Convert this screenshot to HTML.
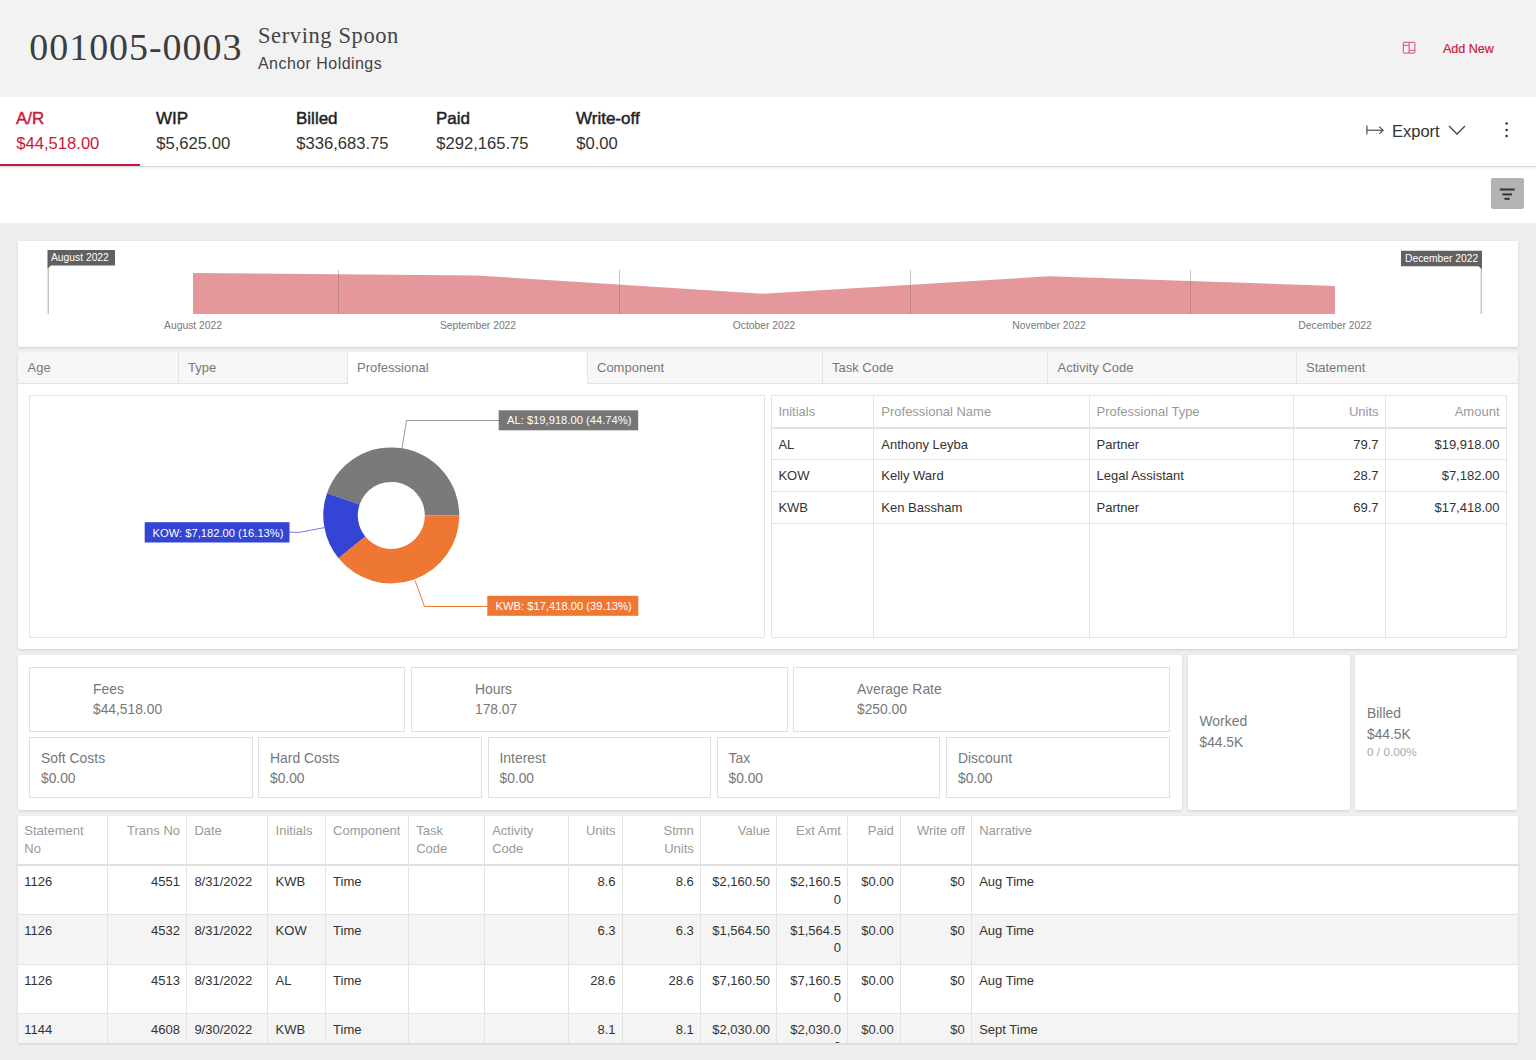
<!DOCTYPE html>
<html><head><meta charset="utf-8">
<style>
*{box-sizing:border-box;margin:0;padding:0}
html,body{width:1536px;height:1060px;overflow:hidden;background:#efefef;font-family:"Liberation Sans",sans-serif;color:#333}
.abs{position:absolute}
#hdr{position:absolute;left:0;top:0;width:1536px;height:97px;background:#f2f2f2}
#title{position:absolute;left:29.3px;top:24.8px;font-family:"Liberation Serif",serif;font-size:38px;letter-spacing:0.95px;color:#3d3d3d;line-height:44px;white-space:nowrap}
#sub1{position:absolute;left:258px;top:22.3px;font-family:"Liberation Serif",serif;font-size:22.5px;letter-spacing:0.6px;color:#444;line-height:28px;white-space:nowrap}
#sub2{position:absolute;left:258px;top:54px;font-size:16px;letter-spacing:0.45px;color:#444;line-height:20px;white-space:nowrap}
#addnew{position:absolute;left:1443px;top:42px;font-size:12.5px;color:#c8193c;line-height:15px;-webkit-text-stroke:0.2px #c8193c}
#tabbar{position:absolute;left:0;top:97px;width:1536px;height:70px;background:#fff;border-bottom:1px solid #d6d6d6;box-shadow:0 1px 2px rgba(0,0,0,0.08);z-index:2}
.stab{position:absolute;top:0;width:140px;height:69px}
.stab .l{position:absolute;left:16px;top:12px;font-size:17px;-webkit-text-stroke:0.45px currentColor;line-height:20px;color:#222;white-space:nowrap}
.stab .v{position:absolute;left:16.3px;top:37.3px;font-size:16.6px;line-height:20px;color:#333;white-space:nowrap}
.stab.act .l,.stab.act .v{color:#c8193c}
.stab.act{border-bottom:2px solid #c8193c;height:69px}
#white2{position:absolute;left:0;top:167px;width:1536px;height:56px;background:#fff}
.card{position:absolute;background:#fff;box-shadow:0 1px 3px rgba(0,0,0,0.14);border-radius:2px}

.ptab{position:absolute;top:-1px;height:32px;background:#f7f7f7;border:1px solid #e3e3e3;border-top:none;border-left:none;font-size:13px;color:#777;line-height:15px;padding:8px 0 0 9.5px;white-space:nowrap}
.ptab.act{background:#fff;border-bottom-color:#fff}
.pc{font-size:13px;line-height:15px;white-space:nowrap}
.pt td,.pt th{border:1px solid #e0e0e0;height:32px;padding:0 7px;font-weight:normal;text-align:left;white-space:nowrap}
.pt th{color:#999;border-bottom:2px solid #e0e0e0}
.pt .r{text-align:right}

.sb{position:absolute;border:1px solid #e0e0e0;background:#fff}
.st{position:absolute;font-size:13.9px;line-height:20px;color:#777;white-space:nowrap}
.sv{font-size:13.8px}
.dt{position:absolute;font-size:13px;line-height:17.5px;white-space:nowrap}
</style></head><body>
<div id="hdr">
  <div id="title">001005-0003</div>
  <div id="sub1">Serving Spoon</div>
  <div id="sub2">Anchor Holdings</div>
  <svg class="abs" style="left:1402px;top:41px" width="14" height="13" viewBox="0 0 14 13">
    <rect x="1.3" y="1.3" width="11.6" height="10.8" rx="0.8" fill="none" stroke="#d23b55" stroke-width="0.9"/>
    <line x1="7.1" y1="1.3" x2="7.1" y2="12.1" stroke="#d23b55" stroke-width="0.9"/>
    <line x1="1.3" y1="4.4" x2="7.1" y2="4.4" stroke="#d23b55" stroke-width="0.8"/>
    <line x1="7.1" y1="9.4" x2="12.9" y2="9.4" stroke="#d23b55" stroke-width="0.8"/>
  </svg>
  <div id="addnew">Add New</div>
</div>
<div id="tabbar">
  <div class="stab act" style="left:0"><div class="l">A/R</div><div class="v">$44,518.00</div></div>
  <div class="stab" style="left:140px"><div class="l">WIP</div><div class="v">$5,625.00</div></div>
  <div class="stab" style="left:280px"><div class="l">Billed</div><div class="v">$336,683.75</div></div>
  <div class="stab" style="left:420px"><div class="l">Paid</div><div class="v">$292,165.75</div></div>
  <div class="stab" style="left:560px"><div class="l">Write-off</div><div class="v">$0.00</div></div>
  <svg class="abs" style="left:1364px;top:27px" width="22" height="12" viewBox="0 0 22 12">
    <line x1="2.9" y1="1.6" x2="2.9" y2="10.2" stroke="#444" stroke-width="1.15"/>
    <line x1="3" y1="6.2" x2="19" y2="6.2" stroke="#444" stroke-width="1.15"/>
    <polyline points="15.3,2.6 19.1,6.2 15.3,9.8" fill="none" stroke="#444" stroke-width="1.15"/>
  </svg>
  <div class="abs" style="left:1392px;top:24px;font-size:16.5px;line-height:20px;color:#333">Export</div>
  <svg class="abs" style="left:1448px;top:28px" width="18" height="10" viewBox="0 0 18 10">
    <polyline points="1,1 9,9 17,1" fill="none" stroke="#444" stroke-width="1.3"/>
  </svg>
  <svg class="abs" style="left:1504px;top:24px" width="5" height="17" viewBox="0 0 5 17">
    <circle cx="2.6" cy="2.4" r="1.25" fill="#333"/><circle cx="2.6" cy="8.9" r="1.25" fill="#333"/><circle cx="2.6" cy="14.9" r="1.25" fill="#333"/>
  </svg>
</div>
<div id="white2">
  <div class="abs" style="left:1491px;top:11px;width:33px;height:31px;background:#b3b3b3;border-radius:2px">
    <svg class="abs" style="left:0;top:0" width="33" height="31" viewBox="0 0 33 31">
      <line x1="8.8" y1="11.5" x2="23.7" y2="11.5" stroke="#333" stroke-width="2"/>
      <line x1="11.3" y1="16.4" x2="21" y2="16.4" stroke="#333" stroke-width="2"/>
      <line x1="13.4" y1="20.8" x2="18.8" y2="20.8" stroke="#333" stroke-width="2"/>
    </svg>
  </div>
</div>

<div class="card" style="left:18px;top:241px;width:1500px;height:106px">
<svg class="abs" style="left:0;top:0" width="1500" height="106" viewBox="18 241 1500 106">
  <polygon points="193,273 477,275.5 763,293.8 1049,276.3 1335,286 1335,314 193,314" fill="#e5989b"/>
  <g stroke="#8a6a6a" stroke-width="1" opacity="0.42">
    <line x1="338.5" y1="270" x2="338.5" y2="314"/>
    <line x1="619.5" y1="270" x2="619.5" y2="314"/>
    <line x1="910.5" y1="270" x2="910.5" y2="314"/>
    <line x1="1190.5" y1="270" x2="1190.5" y2="314"/>
  </g>
  <line x1="48.2" y1="262" x2="48.2" y2="314" stroke="#adadad" stroke-width="1"/>
  <line x1="1481.2" y1="262" x2="1481.2" y2="314" stroke="#adadad" stroke-width="1"/>
  <path d="M47.5,250 H115 V265.6 H51 L47.5,268.8 Z" fill="#616161"/>
  <path d="M1401,250.8 H1482 V269.3 L1478.5,266.2 H1401 Z" fill="#616161"/>
  <g font-family="Liberation Sans" font-size="10.3" fill="#fff">
    <text x="51" y="261.2">August 2022</text>
    <text x="1405" y="262">December 2022</text>
  </g>
  <g font-family="Liberation Sans" font-size="10.3" fill="#777" text-anchor="middle">
    <text x="193" y="329">August 2022</text>
    <text x="478" y="329">September 2022</text>
    <text x="764" y="329">October 2022</text>
    <text x="1049" y="329">November 2022</text>
    <text x="1335" y="329">December 2022</text>
  </g>
</svg>
</div>

<div class="card" style="left:18px;top:353px;width:1500px;height:296px">
  <div class="ptab" style="left:0;width:160.5px;border-left:none">Age</div>
  <div class="ptab" style="left:160.5px;width:169px">Type</div>
  <div class="ptab act" style="left:329.5px;width:240px">Professional</div>
  <div class="ptab" style="left:569.5px;width:235px">Component</div>
  <div class="ptab" style="left:804.5px;width:225.5px">Task Code</div>
  <div class="ptab" style="left:1030px;width:248.5px">Activity Code</div>
  <div class="ptab" style="left:1278.5px;width:221.5px;border-right:none">Statement</div>
  <div class="abs" style="left:11px;top:42px;width:736px;height:243px;border:1px solid #e3e3e3"></div>
  <svg class="abs" style="left:0;top:0" width="760" height="295" viewBox="18 353 760 295">
    <g id="donut"><path d="M459.30,515.40 A68,68 0 0 0 326.98,493.33 L359.61,504.53 A33.5,33.5 0 0 1 424.80,515.40 Z" fill="#7a7a7a"/>
<path d="M326.98,493.33 A68,68 0 0 0 338.55,558.32 L365.31,536.54 A33.5,33.5 0 0 1 359.61,504.53 Z" fill="#3444d4"/>
<path d="M338.55,558.32 A68,68 0 0 0 459.30,515.40 L424.80,515.40 A33.5,33.5 0 0 1 365.31,536.54 Z" fill="#ee7733"/>
<polyline points="402,448 406.5,420.5 499,420.5" fill="none" stroke="#999" stroke-width="1"/>
<polyline points="415,580.5 424.5,606.5 488,606.5" fill="none" stroke="#ee7733" stroke-width="1"/>
<polyline points="289,532 298.5,532.5 325,527.5" fill="none" stroke="#6f7ae6" stroke-width="1"/>
<rect x="498.7" y="410.3" width="139.5" height="20" fill="#767676"/>
<rect x="487.3" y="595.8" width="151" height="20" fill="#ee7733"/>
<rect x="144.7" y="522.2" width="144.8" height="20.3" fill="#3444d4"/>
<g font-family="Liberation Sans" font-size="11.2" fill="#fff"><text x="507" y="424.3">AL: $19,918.00 (44.74%)</text><text x="495.5" y="610">KWB: $17,418.00 (39.13%)</text><text x="152.5" y="536.5">KOW: $7,182.00 (16.13%)</text></g></g>
  </svg>
<div class="abs" style="left:753px;top:42px;width:1px;height:243px;background:#e3e3e3"></div>
<div class="abs" style="left:855px;top:42px;width:1px;height:243px;background:#e3e3e3"></div>
<div class="abs" style="left:1071px;top:42px;width:1px;height:243px;background:#e3e3e3"></div>
<div class="abs" style="left:1275px;top:42px;width:1px;height:243px;background:#e3e3e3"></div>
<div class="abs" style="left:1367px;top:42px;width:1px;height:243px;background:#e3e3e3"></div>
<div class="abs" style="left:1488px;top:42px;width:1px;height:243px;background:#e3e3e3"></div>
<div class="abs" style="left:753px;top:42px;width:736px;height:1px;background:#e3e3e3"></div>
<div class="abs" style="left:753px;top:74px;width:736px;height:2px;background:#e3e3e3"></div>
<div class="abs" style="left:753px;top:106px;width:736px;height:1px;background:#e3e3e3"></div>
<div class="abs" style="left:753px;top:138px;width:736px;height:1px;background:#e3e3e3"></div>
<div class="abs" style="left:753px;top:170px;width:736px;height:1px;background:#e3e3e3"></div>
<div class="abs" style="left:753px;top:284px;width:736px;height:1px;background:#e3e3e3"></div>
<div class="abs pc" style="left:760.4px;top:51px;color:#999">Initials</div>
<div class="abs pc" style="left:863.3px;top:51px;color:#999">Professional Name</div>
<div class="abs pc" style="left:1078.5px;top:51px;color:#999">Professional Type</div>
<div class="abs pc" style="right:139.5px;top:51px;color:#999;text-align:right">Units</div>
<div class="abs pc" style="right:18.5px;top:51px;color:#999;text-align:right">Amount</div>
<div class="abs pc" style="left:760.4px;top:83.5px;color:#333">AL</div>
<div class="abs pc" style="left:863.3px;top:83.5px;color:#333">Anthony Leyba</div>
<div class="abs pc" style="left:1078.5px;top:83.5px;color:#333">Partner</div>
<div class="abs pc" style="right:139.5px;top:83.5px;color:#333;text-align:right">79.7</div>
<div class="abs pc" style="right:18.5px;top:83.5px;color:#333;text-align:right">$19,918.00</div>
<div class="abs pc" style="left:760.4px;top:115.1px;color:#333">KOW</div>
<div class="abs pc" style="left:863.3px;top:115.1px;color:#333">Kelly Ward</div>
<div class="abs pc" style="left:1078.5px;top:115.1px;color:#333">Legal Assistant</div>
<div class="abs pc" style="right:139.5px;top:115.1px;color:#333;text-align:right">28.7</div>
<div class="abs pc" style="right:18.5px;top:115.1px;color:#333;text-align:right">$7,182.00</div>
<div class="abs pc" style="left:760.4px;top:146.7px;color:#333">KWB</div>
<div class="abs pc" style="left:863.3px;top:146.7px;color:#333">Ken Bassham</div>
<div class="abs pc" style="left:1078.5px;top:146.7px;color:#333">Partner</div>
<div class="abs pc" style="right:139.5px;top:146.7px;color:#333;text-align:right">69.7</div>
<div class="abs pc" style="right:18.5px;top:146.7px;color:#333;text-align:right">$17,418.00</div>
</div>
<div class="card" style="left:18px;top:654.5px;width:1164px;height:155.5px"></div>
<div class="card" style="left:1187.5px;top:655px;width:162px;height:155px;border-radius:2px"></div>
<div class="card" style="left:1355px;top:655px;width:162px;height:155px;border-radius:2px"></div>
<div class="sb" style="left:29px;top:667px;width:376px;height:64.5px"></div>
<div class="st" style="left:93px;top:678.5px">Fees</div><div class="st sv" style="left:93px;top:700.0px">$44,518.00</div>
<div class="sb" style="left:411px;top:667px;width:376.5px;height:64.5px"></div>
<div class="st" style="left:475px;top:678.5px">Hours</div><div class="st sv" style="left:475px;top:700.0px">178.07</div>
<div class="sb" style="left:793px;top:667px;width:376.5px;height:64.5px"></div>
<div class="st" style="left:857px;top:678.5px">Average Rate</div><div class="st sv" style="left:857px;top:700.0px">$250.00</div>
<div class="sb" style="left:29px;top:737px;width:223.5px;height:60.5px"></div>
<div class="st" style="left:41px;top:747.5px">Soft Costs</div><div class="st sv" style="left:41px;top:769.0px">$0.00</div>
<div class="sb" style="left:258px;top:737px;width:223.5px;height:60.5px"></div>
<div class="st" style="left:270px;top:747.5px">Hard Costs</div><div class="st sv" style="left:270px;top:769.0px">$0.00</div>
<div class="sb" style="left:487.5px;top:737px;width:223.0px;height:60.5px"></div>
<div class="st" style="left:499.5px;top:747.5px">Interest</div><div class="st sv" style="left:499.5px;top:769.0px">$0.00</div>
<div class="sb" style="left:716.5px;top:737px;width:223.5px;height:60.5px"></div>
<div class="st" style="left:728.5px;top:747.5px">Tax</div><div class="st sv" style="left:728.5px;top:769.0px">$0.00</div>
<div class="sb" style="left:946px;top:737px;width:223.5px;height:60.5px"></div>
<div class="st" style="left:958px;top:747.5px">Discount</div><div class="st sv" style="left:958px;top:769.0px">$0.00</div>
<div class="st" style="left:1199.5px;top:710.5px">Worked</div><div class="st sv" style="left:1199.5px;top:733px">$44.5K</div>
<div class="st" style="left:1367px;top:702.5px">Billed</div><div class="st sv" style="left:1367px;top:724.6px">$44.5K</div>
<div class="st" style="left:1367px;top:744.8px;font-size:11.8px;line-height:14px;color:#aaa">0 / 0.00%</div>
<div class="card" style="left:18px;top:816px;width:1500px;height:227px;overflow:hidden">
<div class="abs" style="left:0;top:98.60000000000002px;width:1500px;height:49.799999999999955px;background:#f4f4f4"></div>
<div class="abs" style="left:0;top:197.29999999999995px;width:1500px;height:40px;background:#f4f4f4"></div>
<div class="abs" style="left:89.0px;top:0;width:1px;height:227px;background:#e3e3e3"></div>
<div class="abs" style="left:168.1px;top:0;width:1px;height:227px;background:#e3e3e3"></div>
<div class="abs" style="left:249.3px;top:0;width:1px;height:227px;background:#e3e3e3"></div>
<div class="abs" style="left:306.8px;top:0;width:1px;height:227px;background:#e3e3e3"></div>
<div class="abs" style="left:389.9px;top:0;width:1px;height:227px;background:#e3e3e3"></div>
<div class="abs" style="left:465.9px;top:0;width:1px;height:227px;background:#e3e3e3"></div>
<div class="abs" style="left:550.4px;top:0;width:1px;height:227px;background:#e3e3e3"></div>
<div class="abs" style="left:603.7px;top:0;width:1px;height:227px;background:#e3e3e3"></div>
<div class="abs" style="left:681.9px;top:0;width:1px;height:227px;background:#e3e3e3"></div>
<div class="abs" style="left:758.2px;top:0;width:1px;height:227px;background:#e3e3e3"></div>
<div class="abs" style="left:829.0px;top:0;width:1px;height:227px;background:#e3e3e3"></div>
<div class="abs" style="left:881.9px;top:0;width:1px;height:227px;background:#e3e3e3"></div>
<div class="abs" style="left:952.9px;top:0;width:1px;height:227px;background:#e3e3e3"></div>
<div class="abs" style="left:0;top:48.200000000000045px;width:1500px;height:1.8px;background:#e0e0e0"></div>
<div class="abs" style="left:0;top:98.10000000000002px;width:1500px;height:1px;background:#e3e3e3"></div>
<div class="abs" style="left:0;top:147.89999999999998px;width:1500px;height:1px;background:#e3e3e3"></div>
<div class="abs" style="left:0;top:196.79999999999995px;width:1500px;height:1px;background:#e3e3e3"></div>
<div class="dt" style="left:6.3px;top:6.2px;color:#999">Statement<br>No</div>
<div class="dt" style="right:1338.0px;top:6.2px;color:#999;text-align:right">Trans No</div>
<div class="dt" style="left:176.4px;top:6.2px;color:#999">Date</div>
<div class="dt" style="left:257.6px;top:6.2px;color:#999">Initials</div>
<div class="dt" style="left:315.1px;top:6.2px;color:#999">Component</div>
<div class="dt" style="left:398.2px;top:6.2px;color:#999">Task<br>Code</div>
<div class="dt" style="left:474.2px;top:6.2px;color:#999">Activity<br>Code</div>
<div class="dt" style="right:902.4px;top:6.2px;color:#999;text-align:right">Units</div>
<div class="dt" style="right:824.2px;top:6.2px;color:#999;text-align:right">Stmn<br>Units</div>
<div class="dt" style="right:747.9px;top:6.2px;color:#999;text-align:right">Value</div>
<div class="dt" style="right:677.1px;top:6.2px;color:#999;text-align:right">Ext Amt</div>
<div class="dt" style="right:624.2px;top:6.2px;color:#999;text-align:right">Paid</div>
<div class="dt" style="right:553.2px;top:6.2px;color:#999;text-align:right">Write off</div>
<div class="dt" style="left:961.2px;top:6.2px;color:#999">Narrative</div>
<div class="dt" style="left:6.3px;top:57.3px;color:#333">1126</div>
<div class="dt" style="right:1338.0px;top:57.3px;color:#333;text-align:right">4551</div>
<div class="dt" style="left:176.4px;top:57.3px;color:#333">8/31/2022</div>
<div class="dt" style="left:257.6px;top:57.3px;color:#333">KWB</div>
<div class="dt" style="left:315.1px;top:57.3px;color:#333">Time</div>
<div class="dt" style="right:902.4px;top:57.3px;color:#333;text-align:right">8.6</div>
<div class="dt" style="right:824.2px;top:57.3px;color:#333;text-align:right">8.6</div>
<div class="dt" style="right:747.9px;top:57.3px;color:#333;text-align:right">$2,160.50</div>
<div class="dt" style="right:677.1px;top:57.3px;color:#333;text-align:right">$2,160.5<br>0</div>
<div class="dt" style="right:624.2px;top:57.3px;color:#333;text-align:right">$0.00</div>
<div class="dt" style="right:553.2px;top:57.3px;color:#333;text-align:right">$0</div>
<div class="dt" style="left:961.2px;top:57.3px;color:#333">Aug Time</div>
<div class="dt" style="left:6.3px;top:105.9px;color:#333">1126</div>
<div class="dt" style="right:1338.0px;top:105.9px;color:#333;text-align:right">4532</div>
<div class="dt" style="left:176.4px;top:105.9px;color:#333">8/31/2022</div>
<div class="dt" style="left:257.6px;top:105.9px;color:#333">KOW</div>
<div class="dt" style="left:315.1px;top:105.9px;color:#333">Time</div>
<div class="dt" style="right:902.4px;top:105.9px;color:#333;text-align:right">6.3</div>
<div class="dt" style="right:824.2px;top:105.9px;color:#333;text-align:right">6.3</div>
<div class="dt" style="right:747.9px;top:105.9px;color:#333;text-align:right">$1,564.50</div>
<div class="dt" style="right:677.1px;top:105.9px;color:#333;text-align:right">$1,564.5<br>0</div>
<div class="dt" style="right:624.2px;top:105.9px;color:#333;text-align:right">$0.00</div>
<div class="dt" style="right:553.2px;top:105.9px;color:#333;text-align:right">$0</div>
<div class="dt" style="left:961.2px;top:105.9px;color:#333">Aug Time</div>
<div class="dt" style="left:6.3px;top:155.7px;color:#333">1126</div>
<div class="dt" style="right:1338.0px;top:155.7px;color:#333;text-align:right">4513</div>
<div class="dt" style="left:176.4px;top:155.7px;color:#333">8/31/2022</div>
<div class="dt" style="left:257.6px;top:155.7px;color:#333">AL</div>
<div class="dt" style="left:315.1px;top:155.7px;color:#333">Time</div>
<div class="dt" style="right:902.4px;top:155.7px;color:#333;text-align:right">28.6</div>
<div class="dt" style="right:824.2px;top:155.7px;color:#333;text-align:right">28.6</div>
<div class="dt" style="right:747.9px;top:155.7px;color:#333;text-align:right">$7,160.50</div>
<div class="dt" style="right:677.1px;top:155.7px;color:#333;text-align:right">$7,160.5<br>0</div>
<div class="dt" style="right:624.2px;top:155.7px;color:#333;text-align:right">$0.00</div>
<div class="dt" style="right:553.2px;top:155.7px;color:#333;text-align:right">$0</div>
<div class="dt" style="left:961.2px;top:155.7px;color:#333">Aug Time</div>
<div class="dt" style="left:6.3px;top:204.6px;color:#333">1144</div>
<div class="dt" style="right:1338.0px;top:204.6px;color:#333;text-align:right">4608</div>
<div class="dt" style="left:176.4px;top:204.6px;color:#333">9/30/2022</div>
<div class="dt" style="left:257.6px;top:204.6px;color:#333">KWB</div>
<div class="dt" style="left:315.1px;top:204.6px;color:#333">Time</div>
<div class="dt" style="right:902.4px;top:204.6px;color:#333;text-align:right">8.1</div>
<div class="dt" style="right:824.2px;top:204.6px;color:#333;text-align:right">8.1</div>
<div class="dt" style="right:747.9px;top:204.6px;color:#333;text-align:right">$2,030.00</div>
<div class="dt" style="right:677.1px;top:204.6px;color:#333;text-align:right">$2,030.0<br>0</div>
<div class="dt" style="right:624.2px;top:204.6px;color:#333;text-align:right">$0.00</div>
<div class="dt" style="right:553.2px;top:204.6px;color:#333;text-align:right">$0</div>
<div class="dt" style="left:961.2px;top:204.6px;color:#333">Sept Time</div></div>
</body></html>
